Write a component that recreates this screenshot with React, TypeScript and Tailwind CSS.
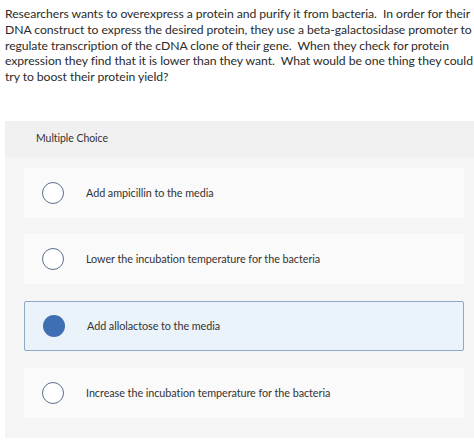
import React from 'react';

const question = [
  'Researchers wants to overexpress a protein and purify it from bacteria.  In order for their',
  'DNA construct to express the desired protein, they use a beta-galactosidase promoter to',
  'regulate transcription of the cDNA clone of their gene.  When they check for protein',
  'expression they find that it is lower than they want.  What would be one thing they could',
  'try to boost their protein yield?',
];

const choices = [
  'Add ampicillin to the media',
  'Lower the incubation temperature for the bacteria',
  'Add allolactose to the media',
  'Increase the incubation temperature for the bacteria',
];

const selected = 2;

export default function App() {
  return (
    <div
      className="w-[474px] h-[440px] overflow-hidden bg-white text-[#2b2b2b]"
      style={{ fontFamily: 'Lato, "Open Sans", sans-serif' }}
    >
      <div className="pt-[6px] pl-[5px] w-[474px] overflow-hidden">
        {question.map((line, i) => (
          <div key={i} className="whitespace-pre text-[12.2px] tracking-[-0.06px] leading-[15.75px]">
            {line}
          </div>
        ))}
      </div>

      <div className="mt-[36px] ml-[5px] w-[480px]">
        <div className="h-[36px] bg-[#f0f0f0] flex items-center pl-[31px] text-[10.5px] tracking-[-0.05px] text-[#333]">
          Multiple Choice
        </div>
        <div className="bg-[#f5f5f5] pt-[11px] pb-[20px] pl-[19px] pr-[21px] flex flex-col gap-[16.7px]">
          {choices.map((c, i) => {
            const isSel = i === selected;
            return (
              <div
                key={i}
                className={`h-[50px] flex items-center pl-[18px] ${
                  isSel ? 'bg-[#eaf2fa] border border-[#8ea8cb] rounded-[2px]' : 'bg-[#fafafa]'
                }`}
              >
                {isSel ? (
                  <div className="w-[22px] h-[22px] rounded-full bg-[#3f6fb3] shrink-0" />
                ) : (
                  <div className="w-[22px] h-[22px] rounded-full border-[1.3px] border-[#5b6f8c] bg-white shrink-0" />
                )}
                <span className="ml-[22px] text-[10.8px] tracking-[-0.05px] text-[#333]">{c}</span>
              </div>
            );
          })}
        </div>
      </div>
    </div>
  );
}
